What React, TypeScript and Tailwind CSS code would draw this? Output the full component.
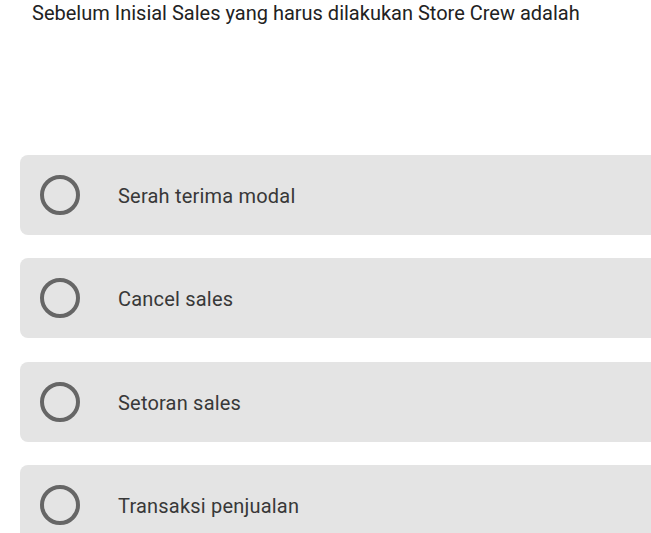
import React from "react";

const options = ["Serah terima modal", "Cancel sales", "Setoran sales", "Transaksi penjualan"];

export default function App() {
  return (
    <div className="w-[651px] h-[533px] overflow-hidden bg-white" style={{ fontFamily: "Roboto, 'Noto Sans', sans-serif" }}>
      <div className="pl-[32px] text-[20px] leading-[27px] text-[#222222] whitespace-nowrap">
        Sebelum Inisial Sales yang harus dilakukan Store Crew adalah
      </div>
      <div className="mt-[128px] pl-[20px] flex flex-col gap-[23.3px]">
        {options.map((o) => (
          <div key={o} className="w-[700px] h-[80px] shrink-0 rounded-[8px] bg-[#e4e4e4] flex items-center">
            <div className="ml-[20px] w-[40px] h-[40px] rounded-full border-[4px] border-[#666666]" />
            <span className="ml-[38px] pt-[2px] text-[20px] text-[#383838] tracking-[0.2px]">{o}</span>
          </div>
        ))}
      </div>
    </div>
  );
}
